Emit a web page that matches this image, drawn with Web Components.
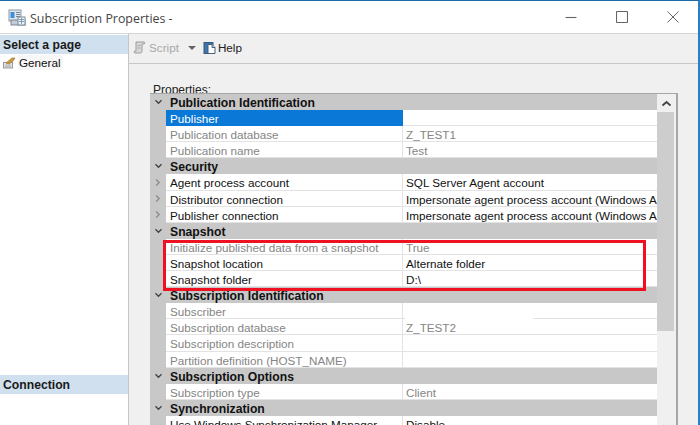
<!DOCTYPE html>
<html>
<head>
<meta charset="utf-8">
<title>Subscription Properties</title>
<style>
  html, body { margin: 0; height: 100%; overflow: hidden; background: #fff; }
  body { font: 11.7px "Liberation Sans", Arial, sans-serif; color: #111; }
</style>
</head>
<body>
<sub-window>
  <page-list slot="side"></page-list>
  <prop-toolbar slot="tools"></prop-toolbar>
  <prop-grid slot="main">
    <grid-cat label="Publication Identification"></grid-cat>
    <grid-row name="Publisher" selected></grid-row>
    <grid-row name="Publication database" value="Z_TEST1" disabled></grid-row>
    <grid-row name="Publication name" value="Test" disabled></grid-row>
    <grid-cat label="Security"></grid-cat>
    <grid-row name="Agent process account" value="SQL Server Agent account" expand></grid-row>
    <grid-row name="Distributor connection" value="Impersonate agent process account (Windows Authentication)" expand></grid-row>
    <grid-row name="Publisher connection" value="Impersonate agent process account (Windows Authentication)" expand></grid-row>
    <grid-cat label="Snapshot"></grid-cat>
    <grid-row name="Initialize published data from a snapshot" value="True" disabled></grid-row>
    <grid-row name="Snapshot location" value="Alternate folder"></grid-row>
    <grid-row name="Snapshot folder" value="D:\"></grid-row>
    <grid-cat label="Subscription Identification"></grid-cat>
    <grid-row name="Subscriber" disabled></grid-row>
    <grid-row name="Subscription database" value="Z_TEST2" disabled></grid-row>
    <grid-row name="Subscription description" disabled></grid-row>
    <grid-row name="Partition definition (HOST_NAME)" disabled></grid-row>
    <grid-cat label="Subscription Options"></grid-cat>
    <grid-row name="Subscription type" value="Client" disabled></grid-row>
    <grid-cat label="Synchronization"></grid-cat>
    <grid-row name="Use Windows Synchronization Manager" value="Disable"></grid-row>
  </prop-grid>
</sub-window>

<script>
const windowTemplate = document.createElement('template');
windowTemplate.innerHTML = `
  <style>
    :host {
      display: flex;
      flex-direction: column;
      box-sizing: border-box;
      height: 425px;
      border-top: 1px solid #1c6aa8;
      border-right: 2px solid #2f7fbf;
      overflow: hidden;
    }
    .title {
      flex: none;
      height: 32px;
      display: flex;
      align-items: center;
      padding-left: 8px;
      border-bottom: 1px solid #d4d4d4;
      font: 12.4px "Open Sans", "Noto Sans", sans-serif;
      color: #444;
    }
    .title span { margin-left: 4px; flex: 1; padding-top: 2px; }
    .title svg.logo { flex: none; }
    .caption { display: flex; align-items: center; }
    .caption div { width: 51px; height: 32px; display: flex; align-items: center; justify-content: center; }
    .body { flex: 1; display: flex; min-height: 0; }
    .side { flex: none; width: 128px; border-right: 1px solid #c6c6c6; display: flex; }
    .right { flex: 1; display: flex; flex-direction: column; background: #f0f0f0; min-width: 0; }
    .content { flex: 1; min-height: 0; padding: 19px 20px 0 21px; display: flex; flex-direction: column; }
    .content label { display: block; height: 10px; line-height: 14px; overflow: hidden; color: #222; padding-left: 3px; flex: none; font-size: 12px; }
  </style>
  <div class="title">
    <svg class="logo" width="18" height="17" viewBox="0 0 18 17">
      <rect x="1" y="1" width="12" height="11" fill="#dfe7ef" stroke="#8a97a5"/>
      <rect x="2.500" y="3" width="4" height="6" fill="#3f8fd8"/>
      <path d="M8 3.500h4M8 5.500h4M8 7.500h4" stroke="#7b8794"/>
      <rect x="3" y="11" width="14" height="5" fill="#c4ccd4" stroke="#7d8894"/>
      <rect x="10" y="8" width="7" height="8" fill="#eef2f6" stroke="#7d8894"/>
      <path d="M11 10.500h5M11 12.500h5M13.500 9v6" stroke="#5f8fb8" stroke-width=".8"/>
    </svg>
    <span>Subscription Properties -</span>
    <div class="caption">
      <div>
        <svg width="12" height="12" viewBox="0 0 12 12"><path d="M0.500 6.500h11" stroke="#666" stroke-width="1.100"/></svg>
      </div>
      <div>
        <svg width="12" height="12" viewBox="0 0 12 12"><rect x=".5" y=".5" width="11" height="11" rx=".8" fill="none" stroke="#666" stroke-width="1.100"/></svg>
      </div>
      <div>
        <svg width="12" height="12" viewBox="0 0 12 12"><path d="M.5 .5l11 11M11.500 .5l-11 11" stroke="#666" stroke-width="1"/></svg>
      </div>
    </div>
  </div>
  <div class="body">
    <div class="side"><slot name="side"></slot></div>
    <div class="right">
      <slot name="tools"></slot>
      <div class="content">
        <label>Properties:</label>
        <slot name="main"></slot>
      </div>
    </div>
  </div>
`;
class SubWindow extends HTMLElement {
  constructor() {
    super();
    this.attachShadow({mode: 'open'});
    this.shadowRoot.appendChild(windowTemplate.content.cloneNode(true));
  }
}
customElements.define('sub-window', SubWindow);

const pageListTemplate = document.createElement('template');
pageListTemplate.innerHTML = `
  <style>
    :host { display: flex; flex-direction: column; flex: 1; background: #fff; padding-top: 1px; }
    h2 {
      margin: 0;
      height: 19px;
      line-height: 20px;
      padding-left: 3px;
      font-size: 12.200px;
      font-weight: bold;
      background: #d1e0ee;
      color: #1a1a1a;
      flex: none;
    }
    .item { height: 17px; display: flex; align-items: center; padding-left: 3px; gap: 2px; flex: none; }
    .item span { background: #f7f7f7; padding: 0 2px 0 1px; line-height: 15px; }
    .fill { flex: 1; }
    .conn { margin-bottom: 31px; }
  </style>
  <h2>Select a page</h2>
  <div class="item">
    <svg width="13" height="12" viewBox="0 0 13 12">
      <rect x=".5" y="5.500" width="9" height="5.500" fill="#e4e4e4" stroke="#9a9a9a"/>
      <path d="M3 6l6-5h3l-2 3 -4 3z" fill="#d29a3c" stroke="#8b6a2a" stroke-width=".6"/>
      <path d="M2 8h6M2 9.500h6" stroke="#a8a8a8" stroke-width=".7"/>
    </svg>
    <span>General</span>
  </div>
  <div class="fill"></div>
  <h2 class="conn">Connection</h2>
`;
class PageList extends HTMLElement {
  constructor() {
    super();
    this.attachShadow({mode: 'open'});
    this.shadowRoot.appendChild(pageListTemplate.content.cloneNode(true));
  }
}
customElements.define('page-list', PageList);

const toolbarTemplate = document.createElement('template');
toolbarTemplate.innerHTML = `
  <style>
    :host {
      display: flex;
      align-items: center;
      flex: none;
      box-sizing: border-box;
      height: 30px;
      padding: 0 0 2px 4px;
      border-bottom: 1px solid #c8c8c8;
      background: #f0f0f0;
    }
    .script { color: #a8a8a8; margin-left: 3px; }
    .arrow { width: 0; height: 0; border: 4px solid transparent; border-top: 4px solid #666; border-bottom: 0; margin: 0 7px 0 9px; }
    .help { color: #222; margin-left: 2px; }
  </style>
  <svg width="13" height="14" viewBox="0 0 13 14">
    <path d="M3 1h8c1 0 1 2 0 2H9v7c0 1-.5 2-1.500 2H2c-1 0-1.500-2 0-2h1z" fill="#d8d8d8" stroke="#9c9c9c"/>
    <path d="M4.500 4.500h3M4.500 7h3" stroke="#9c9c9c" stroke-width=".8"/>
  </svg>
  <span class="script">Script</span>
  <i class="arrow"></i>
  <svg width="13" height="14" viewBox="0 0 13 14">
    <rect x="1" y="1.500" width="9" height="11" fill="#3f75ab" stroke="#35597d"/>
    <path d="M5 3.500h4l3 3v6H5z" fill="#fff" stroke="#47607a"/>
    <path d="M9 3.500v3h3" fill="#c9d6e2" stroke="#47607a"/>
  </svg>
  <span class="help">Help</span>
`;
class PropToolbar extends HTMLElement {
  constructor() {
    super();
    this.attachShadow({mode: 'open'});
    this.shadowRoot.appendChild(toolbarTemplate.content.cloneNode(true));
  }
}
customElements.define('prop-toolbar', PropToolbar);

const gridTemplate = document.createElement('template');
gridTemplate.innerHTML = `
  <style>
    :host {
      display: flex;
      position: relative;
      flex: none;
      height: 343px;
      box-sizing: border-box;
      border: 1px solid #a6a6a6;
      border-width: 1px 2px 0 0;
      background: #c8c8c8;
    }
    .rows { flex: 1; min-width: 0; overflow: hidden; background: #c8c8c8; }
    .bar { flex: none; width: 19px; display: flex; flex-direction: column; background: #f0f0f0; }
    .btn { height: 18px; flex: none; display: flex; align-items: center; justify-content: center; }
    .thumb { height: 219px; flex: none; background: #cdcdcd; margin-right: 2px; }
    .track { flex: 1; }
    .mark {
      position: absolute;
      left: 13px;
      top: 146px;
      width: 477px;
      height: 45px;
      border: 3px solid #ee1122;
    }
    .patch {
      position: absolute;
      left: 255px;
      top: 209px;
      width: 128px;
      height: 17px;
      background: #fff;
    }
  </style>
  <div class="rows"><slot></slot></div>
  <div class="bar">
    <div class="btn"><svg width="11" height="7" viewBox="0 0 11 7"><path d="M1.500 5.500l4-3.500 4 3.500" fill="none" stroke="#444" stroke-width="1.800"/></svg></div>
    <div class="thumb"></div>
    <div class="track"></div>
    <div class="btn"><svg width="11" height="7" viewBox="0 0 11 7"><path d="M1.500 1.500l4 3.500 4-3.500" fill="none" stroke="#444" stroke-width="1.800"/></svg></div>
  </div>
  <div class="patch"></div>
  <div class="mark"></div>
`;
class PropGrid extends HTMLElement {
  constructor() {
    super();
    this.attachShadow({mode: 'open'});
    this.shadowRoot.appendChild(gridTemplate.content.cloneNode(true));
  }
}
customElements.define('prop-grid', PropGrid);

const catTemplate = document.createElement('template');
catTemplate.innerHTML = `
  <style>
    :host { display: flex; height: 16.100px; background: #c8c8c8; font-weight: bold; font-size: 12.200px; color: #111; overflow: hidden; }
    .gutter { width: 16px; flex: none; display: flex; justify-content: center; align-items: center; }
    span { padding-left: 4px; white-space: nowrap; line-height: 19px; }
  </style>
  <div class="gutter"><svg width="9" height="6" viewBox="0 0 9 6"><path d="M1.500 1.200l3 3 3-3" fill="none" stroke="#444" stroke-width="1.400"/></svg></div>
  <span id="label"></span>
`;
class GridCat extends HTMLElement {
  constructor() {
    super();
    this.attachShadow({mode: 'open'});
    this.shadowRoot.appendChild(catTemplate.content.cloneNode(true));
    this.shadowRoot.querySelector('#label').textContent = this.getAttribute('label');
  }
}
customElements.define('grid-cat', GridCat);

const rowTemplate = document.createElement('template');
rowTemplate.innerHTML = `
  <style>
    :host { display: flex; height: 16.100px; background: #c8c8c8; color: #111; }
    :host([disabled]) { color: #858585; }
    .gutter { width: 16px; flex: none; display: flex; justify-content: center; align-items: center; }
    .name, .value {
      box-sizing: border-box;
      background: #fff;
      border-bottom: 1px solid #e3e3e3;
      line-height: 17px;
      padding-left: 4px;
      white-space: nowrap;
      overflow: hidden;
    }
    .name { width: 237px; flex: none; border-right: 1px solid #e3e3e3; }
    .value { flex: 1; min-width: 0; padding-left: 3px; }
    :host([selected]) .name { background: #0a78d7; color: #fff; border-color: #0a78d7; }
  </style>
  <div class="gutter"></div>
  <div class="name"></div>
  <div class="value"></div>
`;
class GridRow extends HTMLElement {
  constructor() {
    super();
    this.attachShadow({mode: 'open'});
    this.shadowRoot.appendChild(rowTemplate.content.cloneNode(true));
    this.shadowRoot.querySelector('.name').textContent = this.getAttribute('name');
    this.shadowRoot.querySelector('.value').textContent = this.getAttribute('value') || '';
    if (this.hasAttribute('expand')) {
      this.shadowRoot.querySelector('.gutter').innerHTML =
        '<svg width="6" height="9" viewBox="0 0 6 9"><path d="M1.200 1.500l3 3-3 3" fill="none" stroke="#8a8a8a" stroke-width="1.200"/></svg>';
    }
  }
}
customElements.define('grid-row', GridRow);
</script>
</body>
</html>
